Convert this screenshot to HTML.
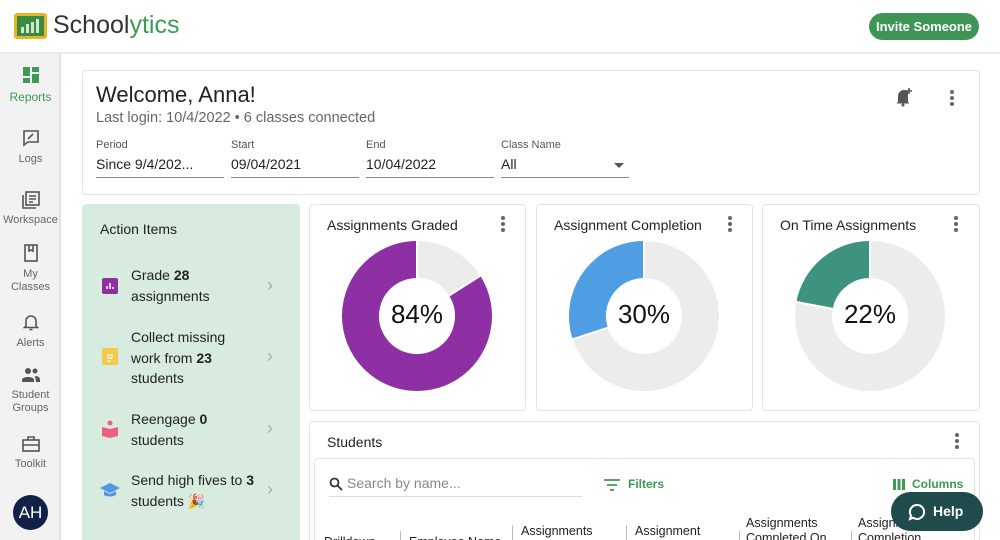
<!DOCTYPE html>
<html style="overflow:hidden;width:1000px;height:540px"><head><meta charset="utf-8"><style>
*{box-sizing:border-box;margin:0;padding:0}
body{width:1000px;height:540px;overflow:hidden;background:#fff;font-family:"Liberation Sans",sans-serif;color:#222;position:relative}
.abs{position:absolute}
.hdr{left:0;top:0;width:1000px;height:54px;border-bottom:2px solid #ececec;background:#fff}
.side{left:0;top:54px;width:61px;height:486px;background:#f2f2f2;border-right:2px solid #e2e2e2}
.nav{position:absolute;left:0;width:61px;text-align:center;font-size:11px;color:#666;line-height:13px}
.card{position:absolute;background:#fff;border:1px solid #e3e3e3;border-radius:4px}
.lbl{position:absolute;font-size:11px;color:#555}
.fld{position:absolute;font-size:14px;color:#222;border-bottom:1px solid #888;height:25px;padding-top:3px}
.ttl{position:absolute;font-size:14px;color:#222}
.dots{position:absolute;width:4px}
.dots i{display:block;width:4px;height:4px;border-radius:2px;background:#666;margin-bottom:2px}
.ai{position:absolute;left:131px;font-size:14px;line-height:20.5px;color:#222}
.chev{position:absolute;left:267px;color:#aaa;font-size:18px}
.pct{position:absolute;font-size:26px;color:#111;width:100px;text-align:center}
</style></head><body>
<div class="abs hdr">
  <svg class="abs" style="left:14px;top:13px" width="33" height="26" viewBox="0 0 33 26"><rect x="0" y="0" width="33" height="26" rx="3" fill="#e9b623"/><rect x="3" y="3" width="27" height="20" fill="#3a8a45"/><rect x="7" y="14" width="3" height="6" fill="#cfe8c8"/><rect x="12" y="11" width="3" height="9" fill="#cfe8c8"/><rect x="17" y="9" width="3" height="11" fill="#cfe8c8"/><rect x="22" y="6" width="3" height="14" fill="#cfe8c8"/></svg>
  <div class="abs" style="left:53px;top:11px;font-size:25px;color:#333">School<span style="color:#3d9a52">ytics</span></div>
  <div class="abs" style="left:869px;top:13px;width:110px;height:27px;border-radius:14px;background:#3f9556;color:#fff;font-size:13px;font-weight:bold;text-align:center;line-height:27px">Invite Someone</div>
</div>
<div class="abs side">
  <div class="nav" style="top:13px;color:#3d9a52"><svg width="16" height="16" viewBox="0 0 16 16" fill="#3d9a52"><rect x="0" y="0" width="7" height="9"/><rect x="9" y="0" width="7" height="5"/><rect x="0" y="11" width="7" height="5"/><rect x="9" y="7" width="7" height="9"/></svg><div style="font-size:12px;margin-top:4px">Reports</div></div>
  <div class="nav" style="top:75px"><svg width="18" height="18" viewBox="0 0 18 18" fill="none" stroke="#555" stroke-width="1.6"><path d="M2 2h14v11H6l-4 3z"/><path d="M6 10l5-5" /></svg><div style="margin-top:2px">Logs</div></div>
  <div class="nav" style="top:137px"><svg width="18" height="18" viewBox="0 0 18 18" fill="none" stroke="#555" stroke-width="1.6"><rect x="4" y="1" width="13" height="13"/><path d="M1 4v13h13M7 5h7M7 8h7M7 11h4"/></svg><div style="margin-top:1px">Workspace</div></div>
  <div class="nav" style="top:190px"><svg width="16" height="18" viewBox="0 0 16 18" fill="none" stroke="#555" stroke-width="1.6"><rect x="2" y="1" width="12" height="16"/><path d="M6 1v6l2-1 2 1V1"/></svg><div style="margin-top:2px">My<br>Classes</div></div>
  <div class="nav" style="top:259px"><svg width="16" height="18" viewBox="0 0 16 18" fill="none" stroke="#555" stroke-width="1.6"><path d="M3 13V8a5 5 0 0110 0v5l1.5 1.5h-13z"/><path d="M6.5 16.5h3"/></svg><div style="margin-top:2px">Alerts</div></div>
  <div class="nav" style="top:313px"><svg width="18" height="16" viewBox="0 0 18 16" fill="#555"><circle cx="6" cy="4" r="3"/><path d="M0 13c0-4 12-4 12 0v2H0z"/><circle cx="13" cy="4" r="2.5"/><path d="M13 9c3 0 5 1 5 4v2h-4z"/></svg><div style="margin-top:2px">Student<br>Groups</div></div>
  <div class="nav" style="top:382px"><svg width="18" height="16" viewBox="0 0 18 16" fill="none" stroke="#555" stroke-width="1.6"><rect x="1" y="4" width="16" height="11"/><path d="M6 4V1h6v3M1 9h16"/></svg><div style="margin-top:2px">Toolkit</div></div>
  <div class="abs" style="left:13px;top:441px;width:35px;height:35px;border-radius:50%;background:#122147;color:#fff;font-size:17px;text-align:center;line-height:35px">AH</div>
</div>

<div class="card" style="left:82px;top:70px;width:898px;height:125px">
  <div class="abs" style="left:13px;top:11px;font-size:22px;color:#222">Welcome, Anna!</div>
  <div class="abs" style="left:13px;top:39px;font-size:14.5px;color:#666">Last login: 10/4/2022 • 6 classes connected</div>
  <div class="lbl" style="left:13px;top:68px">Period</div><div class="fld" style="left:13px;top:82px;width:128px">Since 9/4/202...</div>
  <div class="lbl" style="left:148px;top:68px">Start</div><div class="fld" style="left:148px;top:82px;width:128px">09/04/2021</div>
  <div class="lbl" style="left:283px;top:68px">End</div><div class="fld" style="left:283px;top:82px;width:128px">10/04/2022</div>
  <div class="lbl" style="left:418px;top:68px">Class Name</div><div class="fld" style="left:418px;top:82px;width:128px">All<span style="position:absolute;right:5px;top:10px;border:5px solid transparent;border-top-color:#555"></span></div>
  <svg class="abs" style="left:813px;top:16px" width="18" height="20" viewBox="0 0 18 20" fill="#555"><path d="M2 15V9a6 6 0 0110-4.5V15l1.5 1.5h-13z"/><circle cx="7" cy="18" r="1.5"/><path d="M13 1v6M10 4h6" stroke="#555" stroke-width="1.6"/></svg>
  <div class="dots" style="left:867px;top:19px"><i></i><i></i><i></i></div>
</div>

<div class="card" style="left:82px;top:204px;width:218px;height:340px;background:#d7ebdf;border-color:#d7ebdf">
  <div class="abs" style="left:17px;top:16px;font-size:14px">Action Items</div>
</div>
<div class="abs" style="left:102px;top:278px;width:16px;height:16px;background:#8e2ea0;border-radius:2px"><svg width="16" height="16"><path d="M5 11V8M8 11V5M11 11V9" stroke="#fff" stroke-width="1.5"/></svg></div>
<div class="ai" style="top:265px">Grade <b>28</b><br>assignments</div><div class="chev" style="top:275px">›</div>
<div class="abs" style="left:102px;top:348px;width:16px;height:17px;background:#f5c94a;border-radius:2px"><svg width="16" height="17"><path d="M5 7h6M5 10h6M5 13h4" stroke="#fff" stroke-width="1.2"/></svg></div>
<div class="ai" style="top:327px">Collect missing<br>work from <b>23</b><br>students</div><div class="chev" style="top:346px">›</div>
<svg class="abs" style="left:101px;top:420px" width="18" height="18" viewBox="0 0 18 18" fill="#ec5f7e"><circle cx="9" cy="3" r="2.5"/><path d="M1 7l8 2 8-2v9l-8 2-8-2z"/></svg>
<div class="ai" style="top:409px">Reengage <b>0</b><br>students</div><div class="chev" style="top:418px">›</div>
<svg class="abs" style="left:100px;top:482px" width="20" height="16" viewBox="0 0 20 16" fill="#4f97df"><path d="M0 6l10-5 10 5-10 5z"/><path d="M4 9v4c3 2 9 2 12 0V9l-6 3z"/></svg>
<div class="ai" style="top:470px">Send high fives to <b>3</b><br>students 🎉</div><div class="chev" style="top:479px">›</div>

<div class="card" style="left:309px;top:204px;width:217px;height:207px"><div class="ttl" style="left:17px;top:12px">Assignments Graded</div><div class="dots" style="left:191px;top:11px"><i></i><i></i><i></i></div></div>
<div class="card" style="left:536px;top:204px;width:217px;height:207px"><div class="ttl" style="left:17px;top:12px">Assignment Completion</div><div class="dots" style="left:191px;top:11px"><i></i><i></i><i></i></div></div>
<div class="card" style="left:762px;top:204px;width:218px;height:207px"><div class="ttl" style="left:17px;top:12px">On Time Assignments</div><div class="dots" style="left:191px;top:11px"><i></i><i></i><i></i></div></div>

<svg class="abs" style="left:0;top:0" width="1000" height="540">
 <g fill="none" stroke-width="37">
  <circle cx="417" cy="316" r="56.5" stroke="#ececec"/>
  <circle cx="417" cy="316" r="56.5" stroke="#8e30a3" stroke-dasharray="298.2 400" transform="rotate(-392.4 417 316)"/>
  <circle cx="644" cy="316" r="56.5" stroke="#ececec"/>
  <circle cx="644" cy="316" r="56.5" stroke="#4f9ee3" stroke-dasharray="106.5 400" transform="rotate(-198 644 316)"/>
  <circle cx="870" cy="316" r="56.5" stroke="#ececec"/>
  <circle cx="870" cy="316" r="56.5" stroke="#3d9280" stroke-dasharray="78.1 400" transform="rotate(-169.2 870 316)"/>
 </g>
 <g stroke="#fff" stroke-width="2">
  <path d="M417 240V279M449 295.7L481 275.3"/>
  <path d="M644 240V279M607.9 327.7L572 339.5"/>
  <path d="M870 240V279M832.7 308.9L796 301.9"/>
 </g>
</svg>
<div class="pct" style="left:367px;top:299px">84%</div>
<div class="pct" style="left:594px;top:299px">30%</div>
<div class="pct" style="left:820px;top:299px">22%</div>

<div class="card" style="left:309px;top:421px;width:671px;height:130px">
  <div class="ttl" style="left:17px;top:12px">Students</div>
  <div class="dots" style="left:645px;top:11px"><i></i><i></i><i></i></div>
  <div class="card" style="left:4px;top:36px;width:661px;height:100px">
    <svg class="abs" style="left:14px;top:18px" width="14" height="14" viewBox="0 0 14 14" fill="none" stroke="#333" stroke-width="1.8"><circle cx="5.5" cy="5.5" r="4"/><path d="M8.5 8.5l4.5 4.5"/></svg>
    <div class="abs" style="left:32px;top:16px;font-size:14px;color:#888">Search by name...</div>
    <div class="abs" style="left:14px;top:37px;width:253px;border-top:1px solid #ddd"></div>
    <svg class="abs" style="left:289px;top:20px" width="16" height="12"><path d="M0 1h16M3 6h10M6 11h4" stroke="#3d9a52" stroke-width="1.8"/></svg>
    <div class="abs" style="left:313px;top:18px;font-size:12px;font-weight:bold;color:#3d9a52">Filters</div>
    <svg class="abs" style="left:578px;top:20px" width="12" height="11" fill="#3d9a52"><rect x="0" y="0" width="3" height="11"/><rect x="4.5" y="0" width="3" height="11"/><rect x="9" y="0" width="3" height="11"/></svg>
    <div class="abs" style="left:597px;top:18px;font-size:12px;font-weight:bold;color:#3d9a52">Columns</div>
    <div class="abs" style="left:9px;top:76px;font-size:12.5px">Drilldown</div>
    <div class="abs" style="left:85px;top:72px;height:20px;border-left:1px solid #bbb"></div>
    <div class="abs" style="left:94px;top:76px;font-size:12.5px">Employee Name</div>
    <div class="abs" style="left:197px;top:66px;height:20px;border-left:1px solid #bbb"></div>
    <div class="abs" style="left:206px;top:65px;font-size:12.5px">Assignments</div>
    <div class="abs" style="left:311px;top:66px;height:20px;border-left:1px solid #bbb"></div>
    <div class="abs" style="left:320px;top:65px;font-size:12.5px">Assignment</div>
    <div class="abs" style="left:424px;top:72px;height:20px;border-left:1px solid #bbb"></div>
    <div class="abs" style="left:431px;top:57px;font-size:12.5px;line-height:15px">Assignments<br>Completed On</div>
    <div class="abs" style="left:536px;top:72px;height:20px;border-left:1px solid #bbb"></div>
    <div class="abs" style="left:543px;top:57px;font-size:12.5px;line-height:15px">Assignment<br>Completion</div>
  </div>
</div>
<div class="abs" style="left:891px;top:492px;width:92px;height:39px;border-radius:20px;background:#1f4b4c;color:#fff;font-size:14px;font-weight:bold;line-height:39px">
  <svg class="abs" style="left:17px;top:11px" width="18" height="18" viewBox="0 0 18 18" fill="none" stroke="#fff" stroke-width="2"><path d="M9 2a7 7 0 11-4 12.7L2 16l1-3.3A7 7 0 019 2z"/></svg>
  <span style="position:absolute;left:42px">Help</span>
</div>
</body></html>
